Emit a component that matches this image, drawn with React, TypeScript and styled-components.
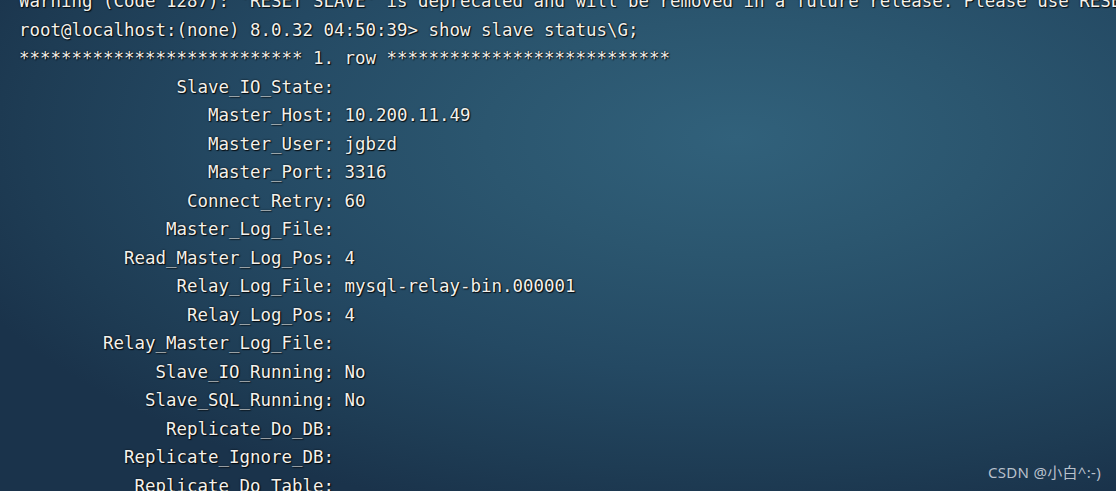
import React from "react";
import styled, { createGlobalStyle } from "styled-components";

const Global = createGlobalStyle`
  html, body { margin: 0; padding: 0; }
  body { width: 1116px; height: 491px; overflow: hidden; background: #1e3a52; }
`;

const Screen = styled.div`
  position: relative;
  width: 1116px;
  height: 491px;
  overflow: hidden;
  background:
    radial-gradient(ellipse 75% 80% at 66% 28%, #31617b 0%, #2b566f 30%, #244963 60%, #1e3c54 85%, #1a334b 100%);
`;

const Console = styled.pre`
  margin: -13px 0 0 0;
  padding: 0 0 0 19px;
  font-family: "DejaVu Sans Mono", "Liberation Mono", monospace;
  font-size: 17.45px;
  line-height: 28.5px;
  color: #f3f1ec;
  white-space: pre;
  text-shadow: 0 0 2px rgba(0, 0, 0, 0.9), 1px 1px 1px rgba(0, 0, 0, 0.8);
`;

const Line = styled.div`
  height: 28.5px;
`;

const Watermark = styled.div`
  position: absolute;
  right: 15px;
  bottom: 9px;
  font-family: "Noto Sans", "Noto Sans CJK SC", sans-serif;
  font-size: 15px;
  color: rgba(215, 220, 226, 0.85);
  letter-spacing: 0.3px;
`;

const pad = (label: string) => " ".repeat(Math.max(0, 29 - label.length)) + label + ":";

const fields: [string, string][] = [
  ["Slave_IO_State", ""],
  ["Master_Host", "10.200.11.49"],
  ["Master_User", "jgbzd"],
  ["Master_Port", "3316"],
  ["Connect_Retry", "60"],
  ["Master_Log_File", ""],
  ["Read_Master_Log_Pos", "4"],
  ["Relay_Log_File", "mysql-relay-bin.000001"],
  ["Relay_Log_Pos", "4"],
  ["Relay_Master_Log_File", ""],
  ["Slave_IO_Running", "No"],
  ["Slave_SQL_Running", "No"],
  ["Replicate_Do_DB", ""],
  ["Replicate_Ignore_DB", ""],
  ["Replicate_Do_Table", ""],
];

const stars = "*".repeat(27);

export default function App() {
  const lines = [
    "Warning (Code 1287): 'RESET SLAVE' is deprecated and will be removed in a future release. Please use RESET REPLICA instead",
    "root@localhost:(none) 8.0.32 04:50:39> show slave status\\G;",
    `${stars} 1. row ${stars}`,
    ...fields.map(([k, v]) => pad(k) + (v ? " " + v : "")),
  ];
  return (
    <Screen>
      <Global />
      <Console>
        {lines.map((l, i) => (
          <Line key={i}>{l}</Line>
        ))}
      </Console>
      <Watermark>CSDN @小白^:-)</Watermark>
    </Screen>
  );
}
